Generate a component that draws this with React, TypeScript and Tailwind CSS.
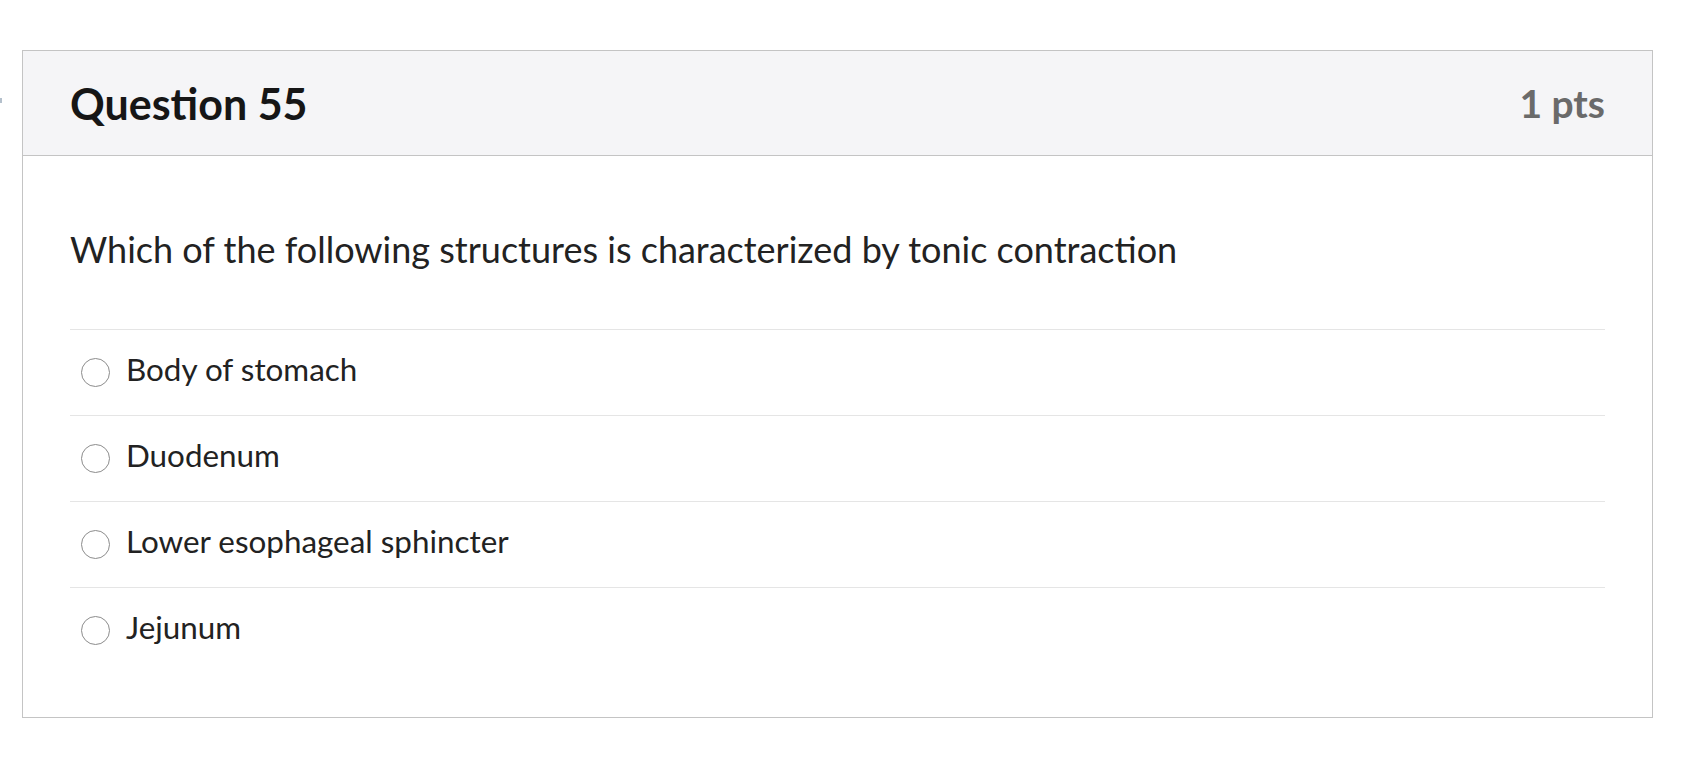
export default function App() {
  const answers = [
    "Body of stomach",
    "Duodenum",
    "Lower esophageal sphincter",
    "Jejunum",
  ];

  return (
    <div className="h-[758px] w-full bg-white font-['Lato','Liberation_Sans',sans-serif]">
      <div className="flex pt-[50px]">
        {/* bit of a cut-off marker on the page edge */}
        <span className="mt-[48px] h-[5px] w-[2px] bg-[#b4c0cc]" />

        <div className="ml-[20px] w-[1631px] border border-[#c4c4c4] bg-white">
          {/* header */}
          <div className="flex h-[105px] items-center justify-between border-b border-[#c4c4c4] bg-[#f5f5f7] px-[47px]">
            <h2 className="text-[43px] font-bold leading-none text-[#161616]">
              Question 55
            </h2>
            <div className="text-[39px] font-bold leading-none text-[#6a6a6a]">
              1 pts
            </div>
          </div>

          {/* body */}
          <div className="px-[47px] pb-[44px] pt-[70px]">
            <p className="mb-[57px] text-[36px] leading-[46px] text-[#222]">
              Which of the following structures is characterized by tonic
              contraction
            </p>

            <div>
              {answers.map((a) => (
                <label
                  key={a}
                  className="flex h-[86px] items-center border-t border-[#e5e5e5]"
                >
                  <span className="ml-[11px] h-[29px] w-[29px] rounded-full border-[1.5px] border-[#8c8c8c] bg-white" />
                  <span className="mb-[6px] ml-[16px] text-[31.4px] leading-none text-[#222]">
                    {a}
                  </span>
                </label>
              ))}
            </div>
          </div>
        </div>
      </div>
    </div>
  );
}
